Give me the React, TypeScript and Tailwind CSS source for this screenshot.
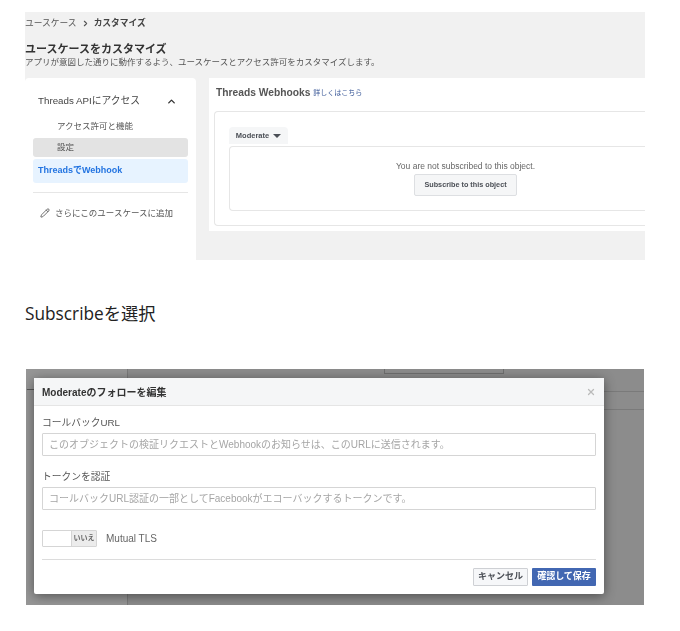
import { ChevronUp, ChevronRight, Pencil, X } from "lucide-react";

const cjk = "font-['Liberation_Sans','Noto_Sans_CJK_JP',sans-serif]";

function Sidebar() {
  return (
    <aside className="flex w-[171px] shrink-0 flex-col rounded-t-sm bg-white px-2 pt-[12px]">
      {/* アコーディオン */}
      <div className="flex h-[22px] items-center justify-between pl-[5px] pr-[11px] text-[9.75px] text-[#444]">
        <span>Threads APIにアクセス</span>
        <ChevronUp size={11} strokeWidth={3} className="text-[#333]" />
      </div>
      <div className="mt-[4px] flex h-[20px] items-center pl-[24px] text-[8.5px] text-[#555]">アクセス許可と機能</div>
      <div className="mt-[2px] flex h-[19px] items-center rounded-[3px] bg-[#e3e3e3] pl-[24px] text-[8.5px] text-[#555]">
        設定
      </div>
      <div className="mt-[2px] flex h-[24px] items-center rounded-[3px] bg-[#e7f3ff] pl-[5px] text-[9px] font-bold text-[#2374e1]">
        ThreadsでWebhook
      </div>
      <div className="mt-[9px] border-t border-[#e6e6e6]" />
      <div className="mt-[14px] flex items-center gap-[5px] pl-[7px] text-[8.5px] text-[#555]">
        <Pencil size={10} className="text-[#555]" />
        <span>さらにこのユースケースに追加</span>
      </div>
    </aside>
  );
}

function WebhookPanel() {
  return (
    <div className="flex h-[153px] flex-col bg-white pl-[5px]">
      <div className="flex h-[33px] items-center gap-[3px] pb-[3px] pl-[2px]">
        <span className="text-[10.25px] font-bold text-[#555]">Threads Webhooks</span>
        <span className="text-[7px] text-[#3b5998]">詳しくはこちら</span>
      </div>
      <div className="flex h-[115px] flex-col rounded-l-sm border border-r-0 border-[#e6e6e6] pl-[14px] pt-[15px]">
        <div className="flex h-[17px] w-[59px] items-center justify-center gap-[4px] rounded-t-sm bg-[#f5f6f7] text-[7.5px] font-bold text-[#4b4f56]">
          Moderate
          <span className="mt-[1px] border-x-[4px] border-t-[4px] border-x-transparent border-t-[#4b4f56]" />
        </div>
        <div className="mt-[2px] flex h-[65px] flex-col items-center rounded-l-sm border border-r-0 border-[#e6e6e6] pl-[56px] pt-[13px]">
          <span className="text-[8.5px] leading-[12px] text-[#666]">You are not subscribed to this object.</span>
          <button className="mt-[2px] h-[22px] w-[103px] rounded-[2px] border border-[#dddfe2] bg-[#f5f6f7] text-[7.25px] font-bold text-[#4b4f56]">
            Subscribe to this object
          </button>
        </div>
      </div>
    </div>
  );
}

function UseCaseShot() {
  return (
    <section className="ml-[25px] flex h-[248px] w-[620px] flex-col bg-[#f1f1f1] blur-[0.35px]">
      <div className="flex h-[24px] items-center gap-[4px] pb-[1px] text-[8.75px] text-[#555]">
        <span>ユースケース</span>
        <ChevronRight size={9} strokeWidth={3} />
        <span className="font-bold text-[#444]">カスタマイズ</span>
      </div>
      <h1 className="mt-[6px] text-[11px] font-bold leading-[14px] text-[#333]">ユースケースをカスタマイズ</h1>
      <p className="text-[8.5px] leading-[13px] text-[#555]">
        アプリが意図した通りに動作するよう、ユースケースとアクセス許可をカスタマイズします。
      </p>
      <div className="mt-[9px] flex flex-1">
        <Sidebar />
        <div className="ml-[13px] flex-1">
          <WebhookPanel />
        </div>
      </div>
    </section>
  );
}

function Field({ label, placeholder }: { label: string; placeholder: string }) {
  return (
    <div>
      <div className="text-[9.75px] leading-[14px] text-[#555]">{label}</div>
      <div className="mt-[3px] flex h-[23px] items-center rounded-[1px] border border-[#d5d5d5] bg-white pl-[6px] text-[10px] text-[#a5a5a5]">
        {placeholder}
      </div>
    </div>
  );
}

function FollowDialog() {
  return (
    <div className="absolute left-[8px] top-[9px] flex h-[216px] w-[570px] flex-col rounded-[2px] bg-white shadow-[0_2px_12px_rgba(0,0,0,0.45)]">
      <div className="flex h-[28px] items-center justify-between border-b border-[#e5e5e5] bg-[#f5f6f7] pl-[8px] pr-[8px] pt-[1px]">
        <span className="text-[10px] font-bold text-[#333]">Moderateのフォローを編集</span>
        <X size={10} strokeWidth={3} className="text-[#bbb]" />
      </div>
      <div className="flex flex-1 flex-col px-[8px] pt-[10px]">
        <Field label="コールバックURL" placeholder="このオブジェクトの検証リクエストとWebhookのお知らせは、このURLに送信されます。" />
        <div className="mt-[14px]">
          <Field label="トークンを認証" placeholder="コールバックURL認証の一部としてFacebookがエコーバックするトークンです。" />
        </div>
        <div className="mt-[20px] flex items-center gap-[9px]">
          <div className="flex h-[17px] w-[55px] rounded-[1px] border border-[#d5d5d5]">
            <div className="w-[28px]" />
            <div className="flex flex-1 items-center justify-center border-l border-[#d5d5d5] bg-[#ececec] text-[7px] font-bold text-[#666]">
              いいえ
            </div>
          </div>
          <span className="text-[10px] text-[#666]">Mutual TLS</span>
        </div>
        <div className="mt-[12px] flex justify-end gap-[4px] border-t border-[#dcdcdc] pt-[8px]">
          <button className="h-[18px] w-[55px] rounded-[1px] border border-[#ced0d4] bg-[#f6f7f9] text-[9px] font-bold text-[#4b4f56]">
            キャンセル
          </button>
          <button className="h-[18px] w-[64px] rounded-[1px] bg-[#4267b2] text-[9px] font-bold text-white">
            確認して保存
          </button>
        </div>
      </div>
    </div>
  );
}

function DialogShot() {
  return (
    <section className="relative ml-[26px] mt-[43px] h-[236px] w-[618px] overflow-hidden bg-[#8c8c8c] blur-[0.35px]">
      {/* 背景の線と文字 */}
      <div className="absolute left-0 top-0 h-full w-[101px] bg-[#969696]" />
      <span className="absolute left-0 top-[15px] text-[9px] text-[#444]">ーブ</span>
      <div className="absolute left-[358px] top-0 h-[5px] w-[120px] border border-t-0 border-[#6f6f6f]" />
      <div className="absolute left-[578px] top-[22px] h-[19px] w-[40px] border-y border-[#7a7a7a]" />
      <div className="absolute left-[101px] top-0 h-full w-[40px] border-l border-[#7a7a7a]" />
      <FollowDialog />
    </section>
  );
}

export default function App() {
  return (
    <div className={`h-[631px] w-[680px] overflow-hidden bg-white pt-[12px] ${cjk}`}>
      <UseCaseShot />
      <p className="ml-[25px] mt-[42px] font-['Open_Sans','Noto_Sans_CJK_JP',sans-serif] text-[17.25px] leading-[24px] text-[#222]">
        Subscribeを選択
      </p>
      <DialogShot />
    </div>
  );
}
